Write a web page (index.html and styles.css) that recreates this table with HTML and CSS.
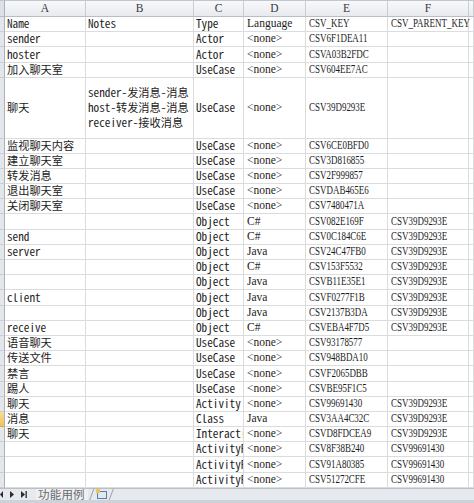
FILE: index.html
```html
<!DOCTYPE html>
<html>
<head>
<meta charset="utf-8">
<link rel="stylesheet" href="styles.css">
</head>
<body>
<div class="sheet">
  <div class="row hdr">
    <div class="c rh"></div><div class="c">A</div><div class="c">B</div><div class="c">C</div><div class="c">D</div><div class="c">E</div><div class="c">F</div><div class="c"></div>
  </div>
  <div class="row"><div class="c rh"></div><div class="c m">Name</div><div class="c m">Notes</div><div class="c m">Type</div><div class="c s">Language</div><div class="c k"><span>CSV_KEY</span></div><div class="c k"><span>CSV_PARENT_KEY</span></div><div class="c"></div></div>
  <div class="row"><div class="c rh"></div><div class="c m">sender</div><div class="c m"></div><div class="c m">Actor</div><div class="c s">&lt;none&gt;</div><div class="c k"><span>CSV6F1DEA11</span></div><div class="c k"></div><div class="c"></div></div>
  <div class="row"><div class="c rh"></div><div class="c m">hoster</div><div class="c m"></div><div class="c m">Actor</div><div class="c s">&lt;none&gt;</div><div class="c k"><span>CSVA03B2FDC</span></div><div class="c k"></div><div class="c"></div></div>
  <div class="row"><div class="c rh"></div><div class="c m">加入聊天室</div><div class="c m"></div><div class="c m">UseCase</div><div class="c s">&lt;none&gt;</div><div class="c k"><span>CSV604EE7AC</span></div><div class="c k"></div><div class="c"></div></div>
  <div class="row tall"><div class="c rh"></div><div class="c m">聊天</div><div class="c m notes">sender-发消息-消息<br>host-转发消息-消息<br>receiver-接收消息</div><div class="c m">UseCase</div><div class="c s">&lt;none&gt;</div><div class="c k"><span>CSV39D9293E</span></div><div class="c k"></div><div class="c"></div></div>
  <div class="row"><div class="c rh"></div><div class="c m">监视聊天内容</div><div class="c m"></div><div class="c m">UseCase</div><div class="c s">&lt;none&gt;</div><div class="c k"><span>CSV6CE0BFD0</span></div><div class="c k"></div><div class="c"></div></div>
  <div class="row"><div class="c rh"></div><div class="c m">建立聊天室</div><div class="c m"></div><div class="c m">UseCase</div><div class="c s">&lt;none&gt;</div><div class="c k"><span>CSV3D816855</span></div><div class="c k"></div><div class="c"></div></div>
  <div class="row"><div class="c rh"></div><div class="c m">转发消息</div><div class="c m"></div><div class="c m">UseCase</div><div class="c s">&lt;none&gt;</div><div class="c k"><span>CSV2F999857</span></div><div class="c k"></div><div class="c"></div></div>
  <div class="row"><div class="c rh"></div><div class="c m">退出聊天室</div><div class="c m"></div><div class="c m">UseCase</div><div class="c s">&lt;none&gt;</div><div class="c k"><span>CSVDAB465E6</span></div><div class="c k"></div><div class="c"></div></div>
  <div class="row"><div class="c rh"></div><div class="c m">关闭聊天室</div><div class="c m"></div><div class="c m">UseCase</div><div class="c s">&lt;none&gt;</div><div class="c k"><span>CSV7480471A</span></div><div class="c k"></div><div class="c"></div></div>
  <div class="row"><div class="c rh"></div><div class="c m"></div><div class="c m"></div><div class="c m">Object</div><div class="c s">C#</div><div class="c k"><span>CSV082E169F</span></div><div class="c k"><span>CSV39D9293E</span></div><div class="c"></div></div>
  <div class="row"><div class="c rh"></div><div class="c m">send</div><div class="c m"></div><div class="c m">Object</div><div class="c s">C#</div><div class="c k"><span>CSV0C184C6E</span></div><div class="c k"><span>CSV39D9293E</span></div><div class="c"></div></div>
  <div class="row"><div class="c rh"></div><div class="c m">server</div><div class="c m"></div><div class="c m">Object</div><div class="c s">Java</div><div class="c k"><span>CSV24C47FB0</span></div><div class="c k"><span>CSV39D9293E</span></div><div class="c"></div></div>
  <div class="row"><div class="c rh"></div><div class="c m"></div><div class="c m"></div><div class="c m">Object</div><div class="c s">C#</div><div class="c k"><span>CSV153F5532</span></div><div class="c k"><span>CSV39D9293E</span></div><div class="c"></div></div>
  <div class="row"><div class="c rh"></div><div class="c m"></div><div class="c m"></div><div class="c m">Object</div><div class="c s">Java</div><div class="c k"><span>CSVB11E35E1</span></div><div class="c k"><span>CSV39D9293E</span></div><div class="c"></div></div>
  <div class="row"><div class="c rh"></div><div class="c m">client</div><div class="c m"></div><div class="c m">Object</div><div class="c s">Java</div><div class="c k"><span>CSVF0277F1B</span></div><div class="c k"><span>CSV39D9293E</span></div><div class="c"></div></div>
  <div class="row"><div class="c rh"></div><div class="c m"></div><div class="c m"></div><div class="c m">Object</div><div class="c s">Java</div><div class="c k"><span>CSV2137B3DA</span></div><div class="c k"><span>CSV39D9293E</span></div><div class="c"></div></div>
  <div class="row"><div class="c rh"></div><div class="c m">receive</div><div class="c m"></div><div class="c m">Object</div><div class="c s">C#</div><div class="c k"><span>CSVEBA4F7D5</span></div><div class="c k"><span>CSV39D9293E</span></div><div class="c"></div></div>
  <div class="row"><div class="c rh"></div><div class="c m">语音聊天</div><div class="c m"></div><div class="c m">UseCase</div><div class="c s">&lt;none&gt;</div><div class="c k"><span>CSV93178577</span></div><div class="c k"></div><div class="c"></div></div>
  <div class="row"><div class="c rh"></div><div class="c m">传送文件</div><div class="c m"></div><div class="c m">UseCase</div><div class="c s">&lt;none&gt;</div><div class="c k"><span>CSV948BDA10</span></div><div class="c k"></div><div class="c"></div></div>
  <div class="row"><div class="c rh"></div><div class="c m">禁言</div><div class="c m"></div><div class="c m">UseCase</div><div class="c s">&lt;none&gt;</div><div class="c k"><span>CSVF2065DBB</span></div><div class="c k"></div><div class="c"></div></div>
  <div class="row"><div class="c rh"></div><div class="c m">踢人</div><div class="c m"></div><div class="c m">UseCase</div><div class="c s">&lt;none&gt;</div><div class="c k"><span>CSVBE95F1C5</span></div><div class="c k"></div><div class="c"></div></div>
  <div class="row"><div class="c rh"></div><div class="c m">聊天</div><div class="c m"></div><div class="c m">Activity</div><div class="c s">&lt;none&gt;</div><div class="c k"><span>CSV99691430</span></div><div class="c k"><span>CSV39D9293E</span></div><div class="c"></div></div>
  <div class="row"><div class="c rh sel"></div><div class="c m">消息</div><div class="c m"></div><div class="c m">Class</div><div class="c s">Java</div><div class="c k"><span>CSV3AA4C32C</span></div><div class="c k"><span>CSV39D9293E</span></div><div class="c"></div></div>
  <div class="row"><div class="c rh"></div><div class="c m">聊天</div><div class="c m"></div><div class="c m clip">Interaction</div><div class="c s">&lt;none&gt;</div><div class="c k"><span>CSVD8FDCEA9</span></div><div class="c k"><span>CSV39D9293E</span></div><div class="c"></div></div>
  <div class="row"><div class="c rh"></div><div class="c m"></div><div class="c m"></div><div class="c m clip">ActivityPartition</div><div class="c s">&lt;none&gt;</div><div class="c k"><span>CSV8F38B240</span></div><div class="c k"><span>CSV99691430</span></div><div class="c"></div></div>
  <div class="row"><div class="c rh"></div><div class="c m"></div><div class="c m"></div><div class="c m clip">ActivityPartition</div><div class="c s">&lt;none&gt;</div><div class="c k"><span>CSV91A80385</span></div><div class="c k"><span>CSV99691430</span></div><div class="c"></div></div>
  <div class="row"><div class="c rh"></div><div class="c m"></div><div class="c m"></div><div class="c m clip">ActivityPartition</div><div class="c s">&lt;none&gt;</div><div class="c k"><span>CSV51272CFE</span></div><div class="c k"><span>CSV99691430</span></div><div class="c"></div></div>
</div>
<div class="tabbar">
  <div class="tabstrip">
    <svg class="nav" width="31" height="11" viewBox="0 0 31 11">
      <polygon points="3,2 0,5.5 3,9" fill="#2b2b2b"/>
      <polygon points="10,2 14,5.5 10,9" fill="#2b2b2b"/>
      <polygon points="21,2 25,5.5 21,9" fill="#2b2b2b"/>
      <rect x="25.5" y="2" width="1.3" height="7" fill="#2b2b2b"/>
    </svg>
    <div class="tab">功能用例</div>
    <svg class="newtab" width="26" height="13" viewBox="0 0 26 13">
      <line x1="0.5" y1="12.5" x2="5" y2="0.5" stroke="#9aa3ad" stroke-width="1"/>
      <rect x="8.5" y="3.5" width="9" height="7" fill="#dfe9f5" stroke="#5a7fa8" stroke-width="1"/>
      <circle cx="9" cy="3" r="2.2" fill="#f3c24a"/>
      <line x1="20" y1="12.5" x2="24.5" y2="0.5" stroke="#9aa3ad" stroke-width="1"/>
    </svg>
  </div>
  <div class="foot"></div>
</div>
</body>
</html>
```

FILE: styles.css
```css
html, body {
  margin: 0;
  padding: 0;
  background: #ffffff;
}
body {
  width: 474px;
  height: 503px;
  overflow: hidden;
}
.sheet {
  display: flex;
  flex-direction: column;
}
.row {
  display: grid;
  grid-template-columns: 5px 81px 108px 50px 62px 82px 81px 5px;
  height: 15.2px;
}
.row.tall {
  height: 60.8px;
}
.c {
  box-sizing: border-box;
  border-right: 1px solid #dadcdd;
  border-bottom: 1px solid #dadcdd;
  white-space: nowrap;
  padding: 0 0 1px 2px;
  display: flex;
  align-items: flex-end;
  color: #1c1c1c;
  line-height: 13px;
  min-width: 0;
}
.clip {
  overflow: hidden;
}
.m {
  font-family: "Noto Sans Mono CJK SC", "Liberation Mono", "Noto Sans CJK SC", monospace;
  font-size: 11.2px;
}
.s {
  font-family: "Liberation Serif", "Noto Sans CJK SC", serif;
  font-size: 11.5px;
  padding-left: 3px;
}
.k {
  font-family: "Liberation Serif", serif;
  font-size: 11.5px;
  padding-left: 3px;
}
.k span {
  display: inline-block;
  transform: scaleX(0.78);
  transform-origin: left bottom;
}
.tall .c {
  align-items: center;
}
.notes {
  white-space: normal;
  line-height: 15px;
}
.rh {
  background: #e3e7ec;
  border-right: 1px solid #a9b1bb;
  border-bottom: 1px solid #c9ced5;
  padding: 0;
}
.rh.sel {
  background: linear-gradient(#f9dd95, #f1c15b);
  border-bottom-color: #e2a93e;
}
.hdr {
  height: 17px;
}
.hdr .c {
  background: linear-gradient(#f8f9fa, #e7eaee);
  border-top: 1px solid #c2c7ce;
  border-right: 1px solid #c8cdd3;
  border-bottom: 1px solid #b9bec6;
  justify-content: center;
  align-items: center;
  padding: 0;
  font-family: "Liberation Serif", serif;
  font-size: 11.5px;
  color: #3a3a3a;
}
.hdr .rh {
  background: #dde1e7;
  border-right: 1px solid #a9b1bb;
}
.tabbar {
  height: 15px;
  display: flex;
  flex-direction: column;
}
.tabstrip {
  height: 11px;
  background: #e6e9ed;
  border-top: 1px solid #b9bfc7;
  display: flex;
  align-items: center;
  gap: 5px;
}
.nav {
  flex: none;
}
.tab {
  font-family: "Noto Sans CJK SC", sans-serif;
  font-size: 11.5px;
  line-height: 11px;
  color: #6a6a6a;
  padding: 0 3px 0 2px;
  height: 11px;
  background: #eef0f3;
  letter-spacing: 0.2px;
}
.newtab {
  flex: none;
  margin-left: -4px;
}
.foot {
  flex: 1;
  background: #cdd2d8;
}
```
